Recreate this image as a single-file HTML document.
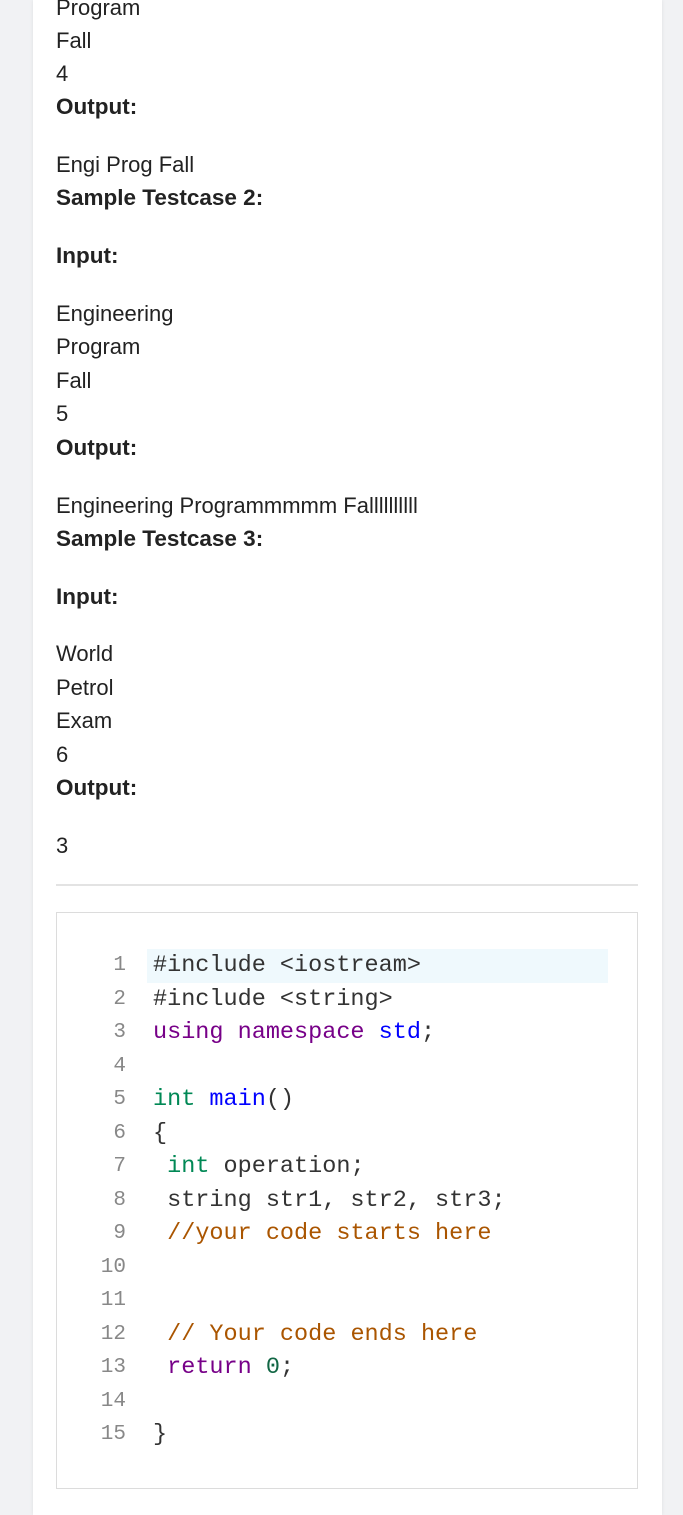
<!DOCTYPE html>
<html><head><meta charset="utf-8"><style>
html,body{margin:0;padding:0;background:#f1f2f4;width:683px;height:1515px;overflow:hidden;position:relative}
.card{position:absolute;left:33px;top:0;width:629px;height:1515px;background:#fff;box-shadow:0 0 4px rgba(0,0,0,.08)}
.t{position:absolute;left:56px;font-family:"Liberation Sans",sans-serif;font-size:22px;color:#222;line-height:30px;transform:translateY(-15px);white-space:nowrap}
.b{font-weight:bold;font-size:22.5px}
.hr{position:absolute;left:56px;width:582px;top:884px;height:2px;background:#e3e3e3}
.box{position:absolute;left:56px;top:912px;width:580px;height:575px;border:1px solid #dcdcdc;background:#fff}
.hl{position:absolute;left:147px;top:949px;width:461px;height:34px;background:#eff9fd}
.n{position:absolute;width:126px;left:0;text-align:right;font-family:"Liberation Mono",monospace;font-size:21px;color:#888;transform:translateY(-12px);line-height:24px}
.c{position:absolute;left:153px;font-family:"Liberation Mono",monospace;font-size:23.5px;color:#333;transform:translateY(-14px);line-height:28px;white-space:pre}
.k{color:#770088}.g{color:#008855}.v{color:#0000ff}.m{color:#aa5500}.u{color:#116644}
</style></head><body>
<div class="card"></div>
<div class="t" style="top:8px">Program</div>
<div class="t" style="top:41px">Fall</div>
<div class="t" style="top:74px">4</div>
<div class="t b" style="top:107px">Output:</div>
<div class="t" style="top:165px">Engi Prog Fall</div>
<div class="t b" style="top:198px">Sample Testcase 2:</div>
<div class="t b" style="top:256px">Input:</div>
<div class="t" style="top:314px">Engineering</div>
<div class="t" style="top:347px">Program</div>
<div class="t" style="top:381px">Fall</div>
<div class="t" style="top:414px">5</div>
<div class="t b" style="top:448px">Output:</div>
<div class="t" style="top:506px">Engineering Programmmmm Fallllllllll</div>
<div class="t b" style="top:539px">Sample Testcase 3:</div>
<div class="t b" style="top:597px">Input:</div>
<div class="t" style="top:654px">World</div>
<div class="t" style="top:688px">Petrol</div>
<div class="t" style="top:721px">Exam</div>
<div class="t" style="top:755px">6</div>
<div class="t b" style="top:788px">Output:</div>
<div class="t" style="top:846px">3</div>
<div class="hr"></div>
<div class="box"></div>
<div class="hl"></div>
<div class="n" style="top:966px">1</div><div class="c" style="top:966px">#include &lt;iostream&gt;</div>
<div class="n" style="top:1000px">2</div><div class="c" style="top:1000px">#include &lt;string&gt;</div>
<div class="n" style="top:1033px">3</div><div class="c" style="top:1033px"><span class="k">using namespace</span> <span class="v">std</span>;</div>
<div class="n" style="top:1067px">4</div>
<div class="n" style="top:1100px">5</div><div class="c" style="top:1100px"><span class="g">int</span> <span class="v">main</span>()</div>
<div class="n" style="top:1134px">6</div><div class="c" style="top:1134px">{</div>
<div class="n" style="top:1167px">7</div><div class="c" style="top:1167px"> <span class="g">int</span> operation;</div>
<div class="n" style="top:1201px">8</div><div class="c" style="top:1201px"> string str1, str2, str3;</div>
<div class="n" style="top:1234px">9</div><div class="c" style="top:1234px"> <span class="m">//your code starts here</span></div>
<div class="n" style="top:1268px">10</div>
<div class="n" style="top:1301px">11</div>
<div class="n" style="top:1335px">12</div><div class="c" style="top:1335px"> <span class="m">// Your code ends here</span></div>
<div class="n" style="top:1368px">13</div><div class="c" style="top:1368px"> <span class="k">return</span> <span class="u">0</span>;</div>
<div class="n" style="top:1402px">14</div>
<div class="n" style="top:1435px">15</div><div class="c" style="top:1435px">}</div>
</body></html>
